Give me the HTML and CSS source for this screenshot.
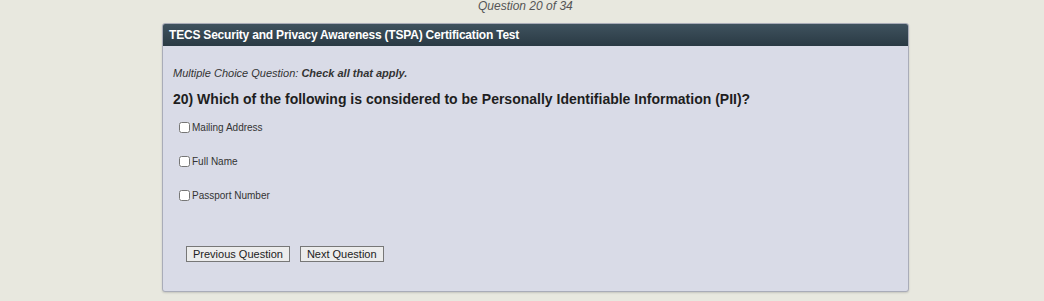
FILE: index.html
```html
<!DOCTYPE html>
<html lang="en">

<head>
    <meta charset="UTF-8">
    <meta name="viewport" content="width=device-width, initial-scale=1.0">
    <title>TECS Security and Privacy Awareness (TSPA) Certification Test</title>

    <link rel="stylesheet" href="styles.css">
</head>

<body>
    <div class="counter">Question 20 of 34</div>

    <div class="panel">
        <div class="panel-header">TECS Security and Privacy Awareness (TSPA) Certification Test</div>

        <div class="panel-body">
            <p class="instructions">Multiple Choice Question: <b>Check all that apply.</b></p>

            <h2 class="question">20) Which of the following is considered to be Personally Identifiable Information (PII)?</h2>

            <div class="answers">
                <label class="answer"><input type="checkbox" name="q20"> Mailing Address</label>
                <label class="answer"><input type="checkbox" name="q20"> Full Name</label>
                <label class="answer"><input type="checkbox" name="q20"> Passport Number</label>
            </div>

            <div class="nav">
                <button class="btn">Previous Question</button>
                <button class="btn">Next Question</button>
            </div>
        </div>
    </div>
</body>

</html>
```

FILE: styles.css
```css
body {
    margin: 0;
    height: 301px;
    overflow: hidden;
    background-color: #e8e8df;
    font-family: "Liberation Sans", Arial, sans-serif;
    color: #222;
}

.counter {
    height: 12px;
    line-height: 12px;
    padding-left: 478px;
    font-size: 12px;
    font-style: italic;
    color: #555;
    margin-bottom: 11px;
}

.panel {
    margin-left: 162px;
    width: 745px;
    height: 267px;
    background-color: #d9dbe7;
    border: 1px solid #a9acb8;
    border-radius: 3px;
    box-shadow: 0 1px 2px rgba(0, 0, 0, 0.15);
    overflow: hidden;
}

.panel-header {
    height: 22px;
    line-height: 22px;
    padding-left: 6px;
    background: linear-gradient(#3f525e, #2a3a44);
    color: #fff;
    font-size: 12px;
    font-weight: bold;
    letter-spacing: -0.2px;
}

.panel-body {
    padding: 21px 10px 0 10px;
}

.instructions {
    margin: 0 0 11px 0;
    font-size: 11px;
    line-height: 13px;
    font-style: italic;
    color: #333;
}

.question {
    margin: 0 0 14px 0;
    font-size: 14px;
    line-height: 16px;
    font-weight: bold;
    color: #1e1e1e;
}

.answers {
    display: flex;
    flex-direction: column;
    gap: 22px;
    padding-left: 6px;
}

.answer {
    display: flex;
    align-items: center;
    height: 12px;
    font-size: 10px;
    color: #333;
}

.answer input {
    width: 11px;
    height: 11px;
    margin: 0 2px 0 0;
}

.nav {
    display: flex;
    gap: 10px;
    margin-top: 45px;
    padding-left: 13px;
}

.btn {
    padding: 1px 6px;
    font-family: "Liberation Sans", Arial, sans-serif;
    font-size: 11px;
    color: #222;
    background-color: #ececec;
    border: 1px solid #777;
    border-radius: 0;
}
```
